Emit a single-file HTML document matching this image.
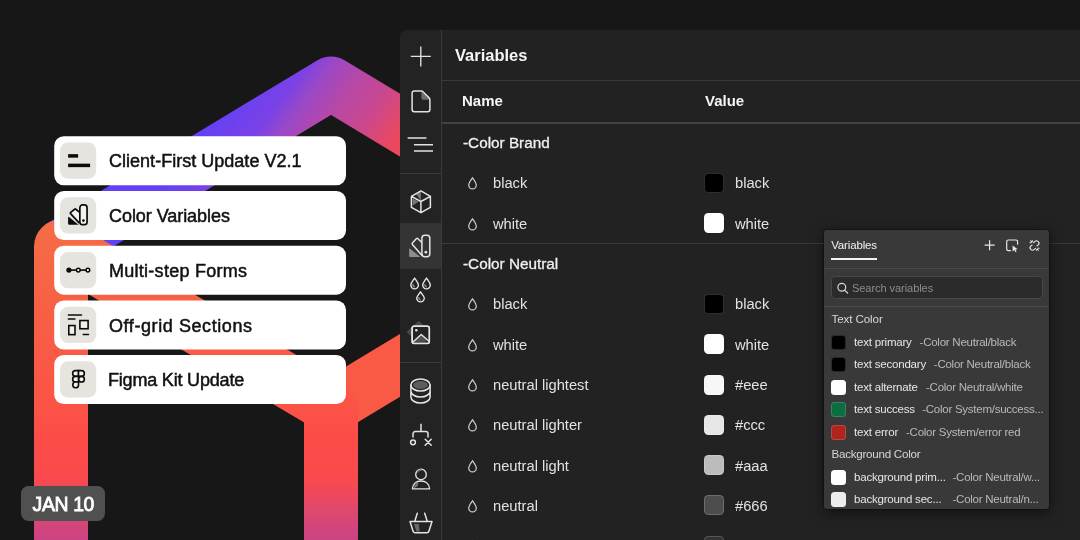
<!DOCTYPE html>
<html lang="en">
<head>
<meta charset="utf-8">
<title>Client-First Update V2.1</title>
<style>
*{box-sizing:border-box;margin:0;padding:0}
html,body{width:1080px;height:540px;overflow:hidden;background:#171717}
body{position:relative;font-family:"Liberation Sans",Arial,sans-serif;color:#fff}
#bg,#cards{position:absolute;left:0;top:0;width:1080px;height:540px}
/* ---------- cards ---------- */
.lbl,#badge,#panel,#pop{will-change:transform}
.card{position:absolute;left:54px;width:292px;height:49px;background:#fff;border-radius:10px;color:#111}
.card .tile{position:absolute;left:6px;top:6.5px;width:36px;height:36px;border-radius:8px;background:#e5e4df}
.card .tile svg{position:absolute;left:0;top:0;width:36px;height:36px}
.lbl{position:absolute;left:109.5px;color:#111;height:49px;line-height:49px;font-size:18px;white-space:nowrap;padding-top:1px;-webkit-text-stroke:0.5px #111}
#badge{position:absolute;left:21px;top:486px;width:84px;padding-top:0.5px;padding-left:0.6px;height:35px;border-radius:7.5px;background:#505050;color:#fff;font-size:19.4px;line-height:35px;text-align:center;letter-spacing:-0.35px;white-space:nowrap;-webkit-text-stroke:0.8px #fff}
/* ---------- panel ---------- */
#panel{position:absolute;left:400px;top:30px;width:680px;height:510px;background:#222222;border-top-left-radius:7px;overflow:hidden}
#side{position:absolute;left:0;top:0;width:42px;height:510px;background:#232323;border-right:1px solid #3a3a3a}
#side .sep{position:absolute;left:0;width:41px;height:1px;background:#3a3a3a}
#side .sel{position:absolute;left:0;top:193px;width:41px;height:46px;background:#343434}
#side svg{position:absolute;left:0;top:0;width:42px;height:510px}
#main{position:absolute;left:42px;top:0;width:638px;height:510px}
.hline{position:absolute;left:0;width:638px;background:#3a3a3a;height:1px}
.t{position:absolute;white-space:nowrap;line-height:20px;height:20px}
.h1{font-weight:bold;font-size:16.5px;color:#f5f5f5;margin-top:0.6px}
.h2{font-weight:bold;font-size:15px;color:#f5f5f5}
.grp{font-size:15.3px;color:#f0f0f0;-webkit-text-stroke:0.3px #f0f0f0}
.row{font-size:14.7px;color:#e2e2e2}
.sw{position:absolute;left:262px;width:20px;height:20px;border-radius:4.5px;border:1px solid rgba(255,255,255,.18)}
.drop{position:absolute;left:25px;width:11px;height:14.67px}
/* ---------- popup ---------- */
#pop{position:absolute;left:824px;top:229.6px;width:225px;height:279.4px;background:#393939;border-radius:3px;box-shadow:0 3px 14px rgba(0,0,0,.55),0 0 0 1px rgba(0,0,0,.25);overflow:hidden;color:#ddd;font-size:11.5px}
#pop .t{line-height:16px;height:16px}
#pop .pl{position:absolute;left:0;width:225px;height:1px;background:#4a4a4a}
#pop .ps{position:absolute;left:7px;width:15px;height:15px;border-radius:3.5px;border:1px solid rgba(255,255,255,.16)}
#pop .nm{color:#e6e6e6}
#pop .rf{color:#b9b9b9}
#pop .sec{color:#d6d6d6}
</style>
</head>
<body>
<svg id="bg" viewBox="0 0 1080 540">
  <defs>
    <linearGradient id="gTop" gradientUnits="userSpaceOnUse" x1="186.1" y1="135.2" x2="347.9" y2="252.8">
      <stop offset="0.04" stop-color="#6340f6"/>
      <stop offset="0.28" stop-color="#7a42e6"/>
      <stop offset="0.37" stop-color="#9848c8"/>
      <stop offset="0.44" stop-color="#a748b8"/>
      <stop offset="0.53" stop-color="#b848a6"/>
      <stop offset="0.675" stop-color="#c84890"/>
      <stop offset="0.84" stop-color="#e84862"/>
      <stop offset="1" stop-color="#f04c52"/>
    </linearGradient>
    <linearGradient id="gLeft" gradientUnits="userSpaceOnUse" x1="0" y1="220" x2="0" y2="540">
      <stop offset="0" stop-color="#f56e45"/>
      <stop offset="0.3" stop-color="#f75f45"/>
      <stop offset="0.5625" stop-color="#fb5446"/>
      <stop offset="0.6875" stop-color="#fc4c48"/>
      <stop offset="0.79" stop-color="#fb4a4c"/>
      <stop offset="0.85" stop-color="#f0485a"/>
      <stop offset="0.925" stop-color="#d94873"/>
      <stop offset="1" stop-color="#cb4384"/>
    </linearGradient>
  </defs>
  <path d="M61 246.5 L331 83.5 L601 246.5" fill="none" stroke="url(#gTop)" stroke-width="54" stroke-linejoin="round"/>
  <path d="M331 407 L601 244" fill="none" stroke="#f85a45" stroke-width="54"/>
  <path d="M61 620 L61 246.5 L331 407 L331 620" fill="none" stroke="url(#gLeft)" stroke-width="54" stroke-linejoin="round"/>
</svg>

<svg id="cards" viewBox="0 0 1080 540">
  <rect x="54.200" y="136.2" width="291.800" height="49" rx="9.600" fill="#fff"/>
  <rect x="60" y="142.50" width="36.200" height="36.300" rx="8" fill="#e5e4df"/>
  <g transform="translate(60.100 142.65)"><rect x="8" y="11.5" width="10" height="3.5" fill="#0c0c0c"/><rect x="8" y="21" width="22" height="3.5" fill="#0c0c0c"/></g>
  <rect x="54.200" y="191.0" width="291.800" height="49" rx="9.600" fill="#fff"/>
  <rect x="60" y="197.30" width="36.200" height="36.300" rx="8" fill="#e5e4df"/>
  <g transform="translate(60.100 197.45)"><path d="M8 20.300 Q8 18.700 9.200 19.700 L18.400 27.300 H9.200 Q8 27.300 8 26.100 Z" fill="#0c0c0c"/><path d="M19.600 15 L15.700 11.800 Q15.100 11.300 14.500 11.800 L10.600 14.900 Q9.900 15.500 10.500 16.200 L19.200 25.600" fill="#f3f3f0" stroke="#0c0c0c" stroke-width="1.700" stroke-linejoin="round"/><rect x="19.750" y="7.500" width="7.200" height="19.700" rx="2.700" fill="#f3f3f0" stroke="#0c0c0c" stroke-width="1.700"/><circle cx="23.350" cy="23.100" r="1.350" fill="#0c0c0c"/></g>
  <rect x="54.200" y="245.65" width="291.800" height="49" rx="9.600" fill="#fff"/>
  <rect x="60" y="251.95" width="36.200" height="36.300" rx="8" fill="#e5e4df"/>
  <g transform="translate(60.100 252.10)"><path d="M8.6 18 H27.8" stroke="#0c0c0c" stroke-width="1.6"/><circle cx="8.8" cy="18" r="2.6" fill="#0c0c0c"/><circle cx="18.2" cy="18" r="1.85" fill="#fff" stroke="#0c0c0c" stroke-width="1.5"/><circle cx="27.8" cy="18" r="1.85" fill="#fff" stroke="#0c0c0c" stroke-width="1.5"/></g>
  <rect x="54.200" y="300.5" width="291.800" height="49" rx="9.600" fill="#fff"/>
  <rect x="60" y="306.80" width="36.200" height="36.300" rx="8" fill="#e5e4df"/>
  <g transform="translate(60.100 306.95)" fill="none" stroke="#0c0c0c" stroke-width="1.6"><path d="M8.300 8 H21.400 M8.300 12.100 H14.800 M23.100 27.600 H28.400" stroke-linecap="round"/><rect x="8.7" y="18.6" width="6.2" height="9.1" fill="#f1f0ec"/><rect x="19.8" y="13.6" width="8.2" height="8.2" fill="#f1f0ec"/></g>
  <rect x="54.200" y="355.0" width="291.800" height="49" rx="9.600" fill="#fff"/>
  <rect x="60" y="361.30" width="36.200" height="36.300" rx="8" fill="#e5e4df"/>
  <g transform="translate(60.100 361.45)" fill="none" stroke="#0c0c0c" stroke-width="1.6"><g transform="translate(0 -0.600)" fill="#f1f0ec"><path d="M18.4 9.8 H15.4 a2.85 2.85 0 0 0 0 5.7 H18.4 Z"/><path d="M18.4 9.8 H21.4 a2.85 2.85 0 0 1 0 5.7 H18.4 Z"/><path d="M18.4 15.5 H15.4 a2.85 2.85 0 0 0 0 5.7 H18.4 Z"/><circle cx="21.4" cy="18.35" r="2.85"/><path d="M18.4 21.2 H15.4 a2.85 2.85 0 1 0 3 2.85 Z"/></g></g>
</svg>
<div class="lbl" style="top:136.2px;letter-spacing:0.02px;margin-left:-0.7px">Client-First Update V2.1</div>
<div class="lbl" style="top:191.0px;letter-spacing:-0.06px;margin-left:-0.7px">Color Variables</div>
<div class="lbl" style="top:245.65px;letter-spacing:0.27px;margin-left:-0.8px">Multi-step Forms</div>
<div class="lbl" style="top:300.5px;letter-spacing:0.58px;margin-left:-0.7px">Off-grid Sections</div>
<div class="lbl" style="top:355.0px;letter-spacing:-0.19px;margin-left:-1.1px">Figma Kit Update</div>

<div id="badge">JAN 10</div>

<div id="panel">
  <div id="side">
    <div class="sel"></div>
    <div class="sep" style="top:143px"></div>
    <div class="sep" style="top:332px"></div>
    <svg viewBox="0 0 42 510" fill="none" stroke="#e4e4e4" stroke-width="1.35" stroke-linejoin="round" stroke-linecap="round">
      <!-- plus -->
      <path d="M10.8 26.4 H30.8 M20.8 16.4 V36.4" stroke-linecap="butt"/>
      <!-- page -->
      <path d="M21.400 61.400 L29.800 69.800 L23.400 69.800 a2 2 0 0 1 -2 -2 Z" fill="#6e6e6e" stroke="none"/>
      <path d="M14.300 60.900 H21.300 a2 2 0 0 1 1.400 0.600 L29.300 68.100 a2 2 0 0 1 0.600 1.400 V79.600 a2.200 2.200 0 0 1 -2.200 2.200 H14.300 a2.200 2.200 0 0 1 -2.200 -2.200 V63.100 a2.200 2.200 0 0 1 2.200 -2.200 Z" stroke-width="1.500"/>
      <!-- align lines -->
      <path d="M7.600 108 H26.400 M14 114.800 H33 M14 121.100 H33" stroke-linecap="butt" stroke-width="1.500"/>
      <!-- cube -->
      <path d="M20.900 161.400 L16 164 L20.900 170.600 Z" fill="#777" stroke="none"/>
      <path d="M12.600 168.600 L18.600 171.800 L12.600 175.600 Z" fill="#777" stroke="none"/>
      <path d="M20.900 160.900 L30.400 166.300 V177.300 L20.900 182.700 L11.400 177.300 V166.300 Z M11.400 166.300 L20.900 171.500 L30.400 166.300 M20.900 171.500 V182.700" stroke-width="1.500"/>
      <!-- variables -->
      <path d="M9.100 219.600 Q9.100 217.900 10.400 218.900 L20.400 227 H10.300 Q9.100 227 9.100 225.800 Z" fill="#8d8d8d" stroke="none"/>
      <path d="M21.600 212.300 L17.700 208.500 Q17.100 207.900 16.500 208.500 L12.400 213 Q11.800 213.700 12.400 214.400 L22 225.400" fill="#343434" stroke-width="1.500"/>
      <rect x="21.900" y="205.300" width="7.900" height="21.400" rx="3" fill="#343434" stroke-width="1.500"/>
      <circle cx="25.850" cy="222.200" r="1.350" fill="#e4e4e4" stroke="none"/>
      <!-- drops -->
      <g stroke-width="1.4">
      <path d="M14.6 248.2 C13.1 250.5 10.8 252.9 10.8 255.1 a3.8 3.8 0 0 0 7.6 0 C18.4 252.9 16.1 250.5 14.6 248.2 Z"/><path d="M12.7 254.4 a2.1 2.1 0 0 0 1.700 2.700 Z" fill="#8a8a8a" stroke="#8a8a8a" stroke-width="0.8"/>
      <path d="M26.5 248.2 C25.0 250.5 22.7 252.9 22.7 255.1 a3.8 3.8 0 0 0 7.6 0 C30.3 252.9 28.0 250.5 26.5 248.2 Z"/><path d="M24.6 254.4 a2.1 2.1 0 0 0 1.700 2.700 Z" fill="#8a8a8a" stroke="#8a8a8a" stroke-width="0.8"/>
      <path d="M20.5 261.8 C19.0 264.1 16.7 266.5 16.7 268.1 a3.8 3.8 0 0 0 7.6 0 C24.3 266.5 22.0 264.1 20.5 261.8 Z"/><path d="M18.6 267.4 a2.1 2.1 0 0 0 1.700 2.700 Z" fill="#8a8a8a" stroke="#8a8a8a" stroke-width="0.8"/>
      </g>
      <!-- image -->
      <path d="M6.500 301.900 L18.700 290.800 L30.900 301.900 L18.700 313 Z" fill="#484848" stroke="none"/>
      <rect x="12.150" y="296.150" width="17.200" height="17.300" rx="2" fill="#232323"/>
      <path d="M13 312.600 L21.200 304.600 L27 310 L24 312.800 Z" fill="#505050" stroke="none"/>
      <path d="M12.700 312.300 L21.200 304.400 L29.300 311.600" stroke-width="1.400"/>
      <rect x="12.150" y="296.150" width="17.200" height="17.300" rx="2" stroke-width="1.500"/>
      <circle cx="16.300" cy="300.300" r="1.250" fill="#e4e4e4" stroke="none"/>
      <!-- database -->
      <ellipse cx="20.500" cy="355" rx="7.400" ry="4" fill="#5c5c5c" stroke="none"/>
      <ellipse cx="20.500" cy="355" rx="9.600" ry="6" stroke-width="1.500"/>
      <path d="M10.900 355 V367 A9.600 6 0 0 0 30.100 367 V355 M10.900 361 A9.600 6 0 0 0 30.100 361" stroke-width="1.500"/>
      <!-- logic -->
      <path d="M21 393.800 V401.600 M13 407.600 V403.800 a2.200 2.200 0 0 1 2.200 -2.200 H25.800 a2.200 2.200 0 0 1 2.200 2.200 V407.600" stroke-linecap="butt" stroke-width="1.500"/>
      <circle cx="13" cy="412.300" r="2.400" stroke-width="1.500"/>
      <path d="M25.200 409.300 L31.200 415.300 M31.200 409.300 L25.200 415.300" stroke-width="1.500"/>
      <!-- user -->
      <path d="M12.400 458.800 C12.800 453.800 16.400 451 21 451 C25.600 451 29.200 453.800 29.600 458.800 Z" fill="#232323"/>
      <path d="M13.600 458 C14 455 15.600 453.400 18 452.600 C18.600 455.600 17 457.600 13.600 458 Z" fill="#777" stroke="none"/>
      <circle cx="21" cy="444.400" r="5.300" fill="#232323"/>
      <path d="M17.600 442 a3.600 3.600 0 0 1 3.400 -1.800 a2.600 2.600 0 0 0 -3.400 1.800 Z" fill="#777" stroke="#777" stroke-width="1.400"/>
      <!-- basket -->
      <path d="M14 494 L16.400 501.600 H19.600 L18.800 494 Z" fill="#6a6a6a" stroke="none"/>
      <path d="M10 491.600 H32 L28.900 501.200 Q28.400 502.700 26.900 502.700 H15.100 Q13.600 502.700 13.100 501.200 Z M14.700 491.400 L17.300 483.200 M27.300 491.400 L24.700 483.200" stroke-width="1.500"/>
    </svg>
  </div>
  <div id="main">
    <div class="t h1" style="left:13px;top:14px">Variables</div>
    <div class="hline" style="top:50px"></div>
    <div class="t h2" style="left:20px;top:61px">Name</div>
    <div class="t h2" style="left:263px;top:61px">Value</div>
    <div class="hline" style="top:91.5px;height:2px;background:#424242"></div>
    <div class="t grp" style="left:21px;top:103px">-Color Brand</div>
    <div class="hline" style="top:213px"></div>
    <div class="t grp" style="left:21px;top:224px">-Color Neutral</div>
    <svg class="drop" style="top:146.1px" viewBox="0 0 12 16" fill="none" stroke="#cdcdcd" stroke-width="1.35"><path d="M6 2 C4.6 4.2 1.9 7.4 1.9 10 A4.1 4.1 0 0 0 10.1 10 C10.1 7.4 7.4 4.2 6 2 Z"/></svg>
    <div class="t row" style="left:51px;top:143px">black</div>
    <div class="sw" style="top:142.8px;background:#000000"></div>
    <div class="t row" style="left:293px;top:143px">black</div>
    <svg class="drop" style="top:186.6px" viewBox="0 0 12 16" fill="none" stroke="#cdcdcd" stroke-width="1.35"><path d="M6 2 C4.6 4.2 1.9 7.4 1.9 10 A4.1 4.1 0 0 0 10.1 10 C10.1 7.4 7.4 4.2 6 2 Z"/></svg>
    <div class="t row" style="left:51px;top:183.5px">white</div>
    <div class="sw" style="top:183.3px;background:#ffffff"></div>
    <div class="t row" style="left:293px;top:183.5px">white</div>
    <svg class="drop" style="top:267.1px" viewBox="0 0 12 16" fill="none" stroke="#cdcdcd" stroke-width="1.35"><path d="M6 2 C4.6 4.2 1.9 7.4 1.9 10 A4.1 4.1 0 0 0 10.1 10 C10.1 7.4 7.4 4.2 6 2 Z"/></svg>
    <div class="t row" style="left:51px;top:264px">black</div>
    <div class="sw" style="top:263.8px;background:#000000"></div>
    <div class="t row" style="left:293px;top:264px">black</div>
    <svg class="drop" style="top:307.6px" viewBox="0 0 12 16" fill="none" stroke="#cdcdcd" stroke-width="1.35"><path d="M6 2 C4.6 4.2 1.9 7.4 1.9 10 A4.1 4.1 0 0 0 10.1 10 C10.1 7.4 7.4 4.2 6 2 Z"/></svg>
    <div class="t row" style="left:51px;top:304.5px">white</div>
    <div class="sw" style="top:304.3px;background:#ffffff"></div>
    <div class="t row" style="left:293px;top:304.5px">white</div>
    <svg class="drop" style="top:348.1px" viewBox="0 0 12 16" fill="none" stroke="#cdcdcd" stroke-width="1.35"><path d="M6 2 C4.6 4.2 1.9 7.4 1.9 10 A4.1 4.1 0 0 0 10.1 10 C10.1 7.4 7.4 4.2 6 2 Z"/></svg>
    <div class="t row" style="left:51px;top:345px">neutral lightest</div>
    <div class="sw" style="top:344.8px;background:#f7f7f7"></div>
    <div class="t row" style="left:293px;top:345px">#eee</div>
    <svg class="drop" style="top:388.1px" viewBox="0 0 12 16" fill="none" stroke="#cdcdcd" stroke-width="1.35"><path d="M6 2 C4.6 4.2 1.9 7.4 1.9 10 A4.1 4.1 0 0 0 10.1 10 C10.1 7.4 7.4 4.2 6 2 Z"/></svg>
    <div class="t row" style="left:51px;top:385px">neutral lighter</div>
    <div class="sw" style="top:384.8px;background:#e6e6e6"></div>
    <div class="t row" style="left:293px;top:385px">#ccc</div>
    <svg class="drop" style="top:428.6px" viewBox="0 0 12 16" fill="none" stroke="#cdcdcd" stroke-width="1.35"><path d="M6 2 C4.6 4.2 1.9 7.4 1.9 10 A4.1 4.1 0 0 0 10.1 10 C10.1 7.4 7.4 4.2 6 2 Z"/></svg>
    <div class="t row" style="left:51px;top:425.5px">neutral light</div>
    <div class="sw" style="top:425.3px;background:#bcbcbc"></div>
    <div class="t row" style="left:293px;top:425.5px">#aaa</div>
    <svg class="drop" style="top:468.6px" viewBox="0 0 12 16" fill="none" stroke="#cdcdcd" stroke-width="1.35"><path d="M6 2 C4.6 4.2 1.9 7.4 1.9 10 A4.1 4.1 0 0 0 10.1 10 C10.1 7.4 7.4 4.2 6 2 Z"/></svg>
    <div class="t row" style="left:51px;top:465.5px">neutral</div>
    <div class="sw" style="top:465.3px;background:#4d4d4d"></div>
    <div class="t row" style="left:293px;top:465.5px">#666</div>
    <svg class="drop" style="top:509.1px" viewBox="0 0 12 16" fill="none" stroke="#cdcdcd" stroke-width="1.35"><path d="M6 2 C4.6 4.2 1.9 7.4 1.9 10 A4.1 4.1 0 0 0 10.1 10 C10.1 7.4 7.4 4.2 6 2 Z"/></svg>
    <div class="t row" style="left:51px;top:506px">neutral dark</div>
    <div class="sw" style="top:505.8px;background:#333333"></div>
    <div class="t row" style="left:293px;top:506px">#444</div>
  </div>
</div>

<div id="pop">
  <div class="t" style="left:7.2px;top:6.5px;color:#f2f2f2;font-size:11.5px;letter-spacing:-0.15px">Variables</div>
  <div style="position:absolute;left:7px;top:28px;width:46px;height:2px;background:#f2f2f2"></div>
  <svg style="position:absolute;left:155px;top:5px;width:70px;height:20px" viewBox="0 0 70 20" fill="none" stroke="#e6e6e6" stroke-width="1.2">
    <path d="M5.600 10.200 H15.600 M10.600 5.200 V15.200"/>
    <path d="M31.500 15.600 H29.300 a1.600 1.600 0 0 1 -1.600 -1.600 V6.600 a1.600 1.600 0 0 1 1.600 -1.600 H37 a1.600 1.600 0 0 1 1.600 1.600 V9.200" stroke-linecap="round"/>
    <path d="M33.600 10.400 L33.600 16.600 L35.300 15 L36.500 17.300 L37.600 16.700 L36.500 14.500 L38.700 14.300 Z" fill="#e6e6e6" stroke="none"/>
    <g transform="translate(55.500 10.200) scale(0.950 0.880) translate(-55.500 -10.200)"><path d="M54.400 7.300 L55.700 6 a2.600 2.600 0 0 1 3.700 3.700 L58.100 11 M56.600 13.700 L55.300 15 a2.600 2.600 0 0 1 -3.700 -3.700 L52.900 10" stroke-linecap="round"/>
    <path d="M50.600 7.400 H52.200 M53.200 4.800 V6.200 M60.400 13.600 H58.800 M57.800 16.200 V14.800 M51.400 5.200 L52.400 6.200 M59.600 15.800 L58.600 14.800" stroke-linecap="round" stroke-width="1.100"/></g>
  </svg>
  <div class="pl" style="top:37.600px"></div>
  <div style="position:absolute;left:7px;top:46px;width:211.5px;height:22.5px;border-radius:3.500px;background:#2b2b2b;border:1px solid #484848"></div>
  <svg style="position:absolute;left:11px;top:50px;width:16px;height:16px" viewBox="0 0 16 16" fill="none" stroke="#d8d8d8" stroke-width="1.200"><circle cx="6.800" cy="7.200" r="3.900"/><path d="M9.700 10.100 L12.600 13" stroke-linecap="round"/></svg>
  <div class="t" style="left:28px;top:49.500px;color:#8d8d8d;font-size:11px;letter-spacing:-0.05px">Search variables</div>
  <div class="pl" style="top:76.400px"></div>
  <div class="t sec" style="left:7.500px;top:81.4px;font-size:11.6px;letter-spacing:-0.1px;margin-top:-0.2px">Text Color</div>
  <div class="ps" style="top:104.5px;background:#000"></div>
  <div class="t nm" style="left:30px;top:103.9px;letter-spacing:-0.200px">text primary</div>
  <div class="t rf" style="letter-spacing:-0.25px;left:95.6px;top:103.9px">-Color Neutral/black</div>
  <div class="ps" style="top:127.0px;background:#000"></div>
  <div class="t nm" style="left:30px;top:126.4px;letter-spacing:-0.200px">text secondary</div>
  <div class="t rf" style="letter-spacing:-0.25px;left:109.8px;top:126.4px">-Color Neutral/black</div>
  <div class="ps" style="top:149.5px;background:#fff"></div>
  <div class="t nm" style="left:30px;top:148.9px;letter-spacing:-0.200px">text alternate</div>
  <div class="t rf" style="letter-spacing:-0.25px;left:102px;top:148.9px">-Color Neutral/white</div>
  <div class="ps" style="top:172.0px;background:#0b6e41"></div>
  <div class="t nm" style="left:30px;top:171.4px;letter-spacing:-0.200px">text success</div>
  <div class="t rf" style="letter-spacing:-0.25px;left:98.2px;top:171.4px">-Color System/success...</div>
  <div class="ps" style="top:194.5px;background:#b0241c"></div>
  <div class="t nm" style="left:30px;top:193.9px;letter-spacing:-0.200px">text error</div>
  <div class="t rf" style="letter-spacing:-0.25px;left:82px;top:193.9px">-Color System/error red</div>
  <div class="t sec" style="left:7.500px;top:216.4px;font-size:11.6px;letter-spacing:-0.25px;margin-top:-0.2px">Background Color</div>
  <div class="ps" style="top:239.5px;background:#fff"></div>
  <div class="t nm" style="left:30px;top:238.9px;letter-spacing:-0.200px">background prim...</div>
  <div class="t rf" style="letter-spacing:-0.25px;left:128.5px;top:238.9px">-Color Neutral/w...</div>
  <div class="ps" style="top:262.0px;background:#ececec"></div>
  <div class="t nm" style="left:30px;top:261.4px;letter-spacing:-0.200px">background sec...</div>
  <div class="t rf" style="letter-spacing:-0.25px;left:128.5px;top:261.4px">-Color Neutral/n...</div>
</div>
</body>
</html>
